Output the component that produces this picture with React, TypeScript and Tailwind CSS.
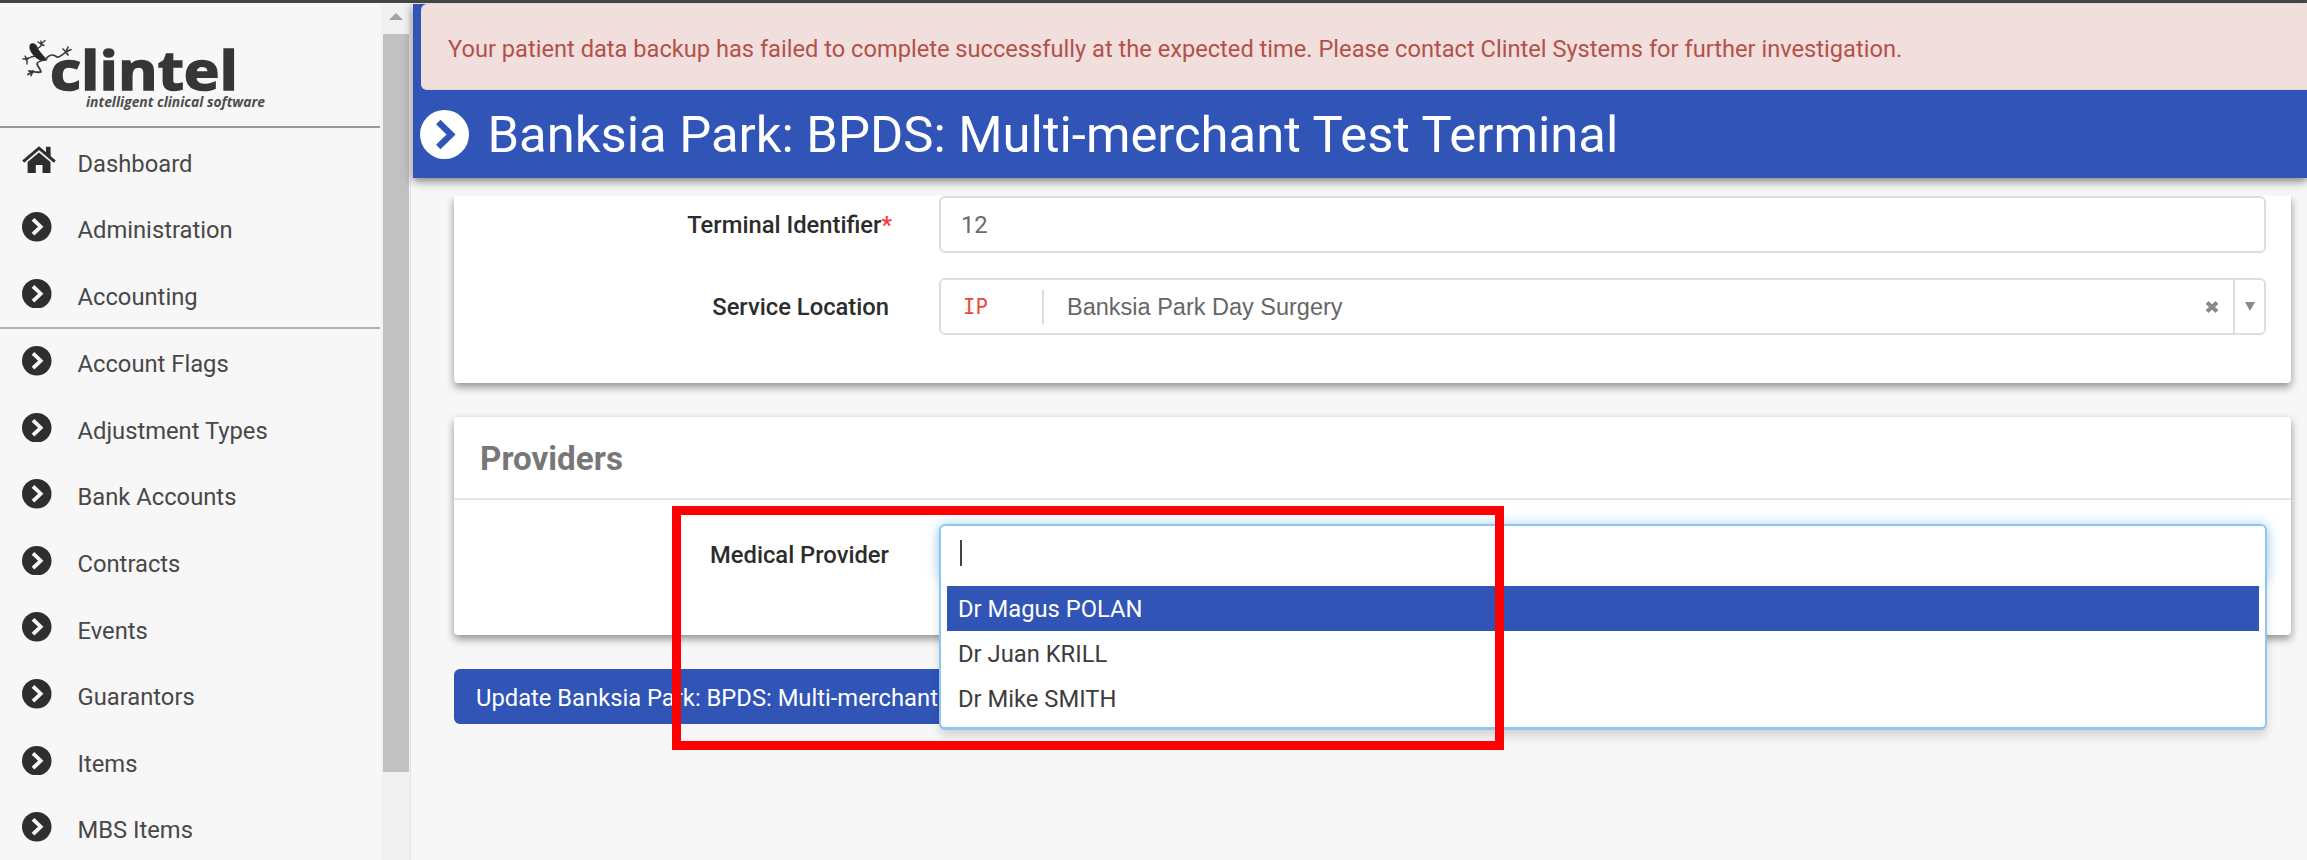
import React, { useState } from 'react';
import clsx from 'clsx';

const mainLinks = ['Administration', 'Accounting'];

const accountingLinks = [
  'Account Flags',
  'Adjustment Types',
  'Bank Accounts',
  'Contracts',
  'Events',
  'Guarantors',
  'Items',
  'MBS Items',
];

const providers = ['Dr Magus POLAN', 'Dr Juan KRILL', 'Dr Mike SMITH'];

const ChevronCircle: React.FC<{ className?: string }> = ({ className }) => (
  <svg viewBox="0 0 30 30" className={className}>
    <circle cx="15" cy="15" r="15" fill="currentColor" />
    <path d="M11.2 7.4 L19 15 L11.2 22.6" fill="none" stroke="var(--chevron)" strokeWidth="3.9" />
  </svg>
);

const HomeIcon = () => (
  <svg viewBox="0 0 34 28" className="h-7 w-[34px]" fill="#2e2e2e">
    <path d="M17 6.5 L28.5 16 V27 H20.5 V19 H13.8 V27 H5.6 V16 Z" />
    <path d="M1.2 15.6 L17 2.2 L32.8 15.6" fill="none" stroke="#2e2e2e" strokeWidth="3" />
    <path d="M24 0.8 H28.6 V11 L24 7 Z" />
  </svg>
);

const Logo = () => (
  <svg viewBox="0 0 260 84" className="ml-5 h-[84px] w-[260px] overflow-visible">
    {/* frog */}
    <g transform="translate(-20 -36)" fill="none" stroke="#3a3a3a" strokeLinecap="round" strokeLinejoin="round">
      <path d="M30 44.5 C32 42 36 43 37.5 47 C39 51 42 54 47.5 60 C43 62.5 38 60 35 57 C31 53 28 48 30 44.5 Z" fill="#262626" stroke="none" />
      <path d="M37 49 L41 46 L41 41 M41 44 L38 42 M41 44 L45 40.5 M41 44 L44 45.5" strokeWidth="1.4" />
      <path d="M35 56 L31 57 L26 60 M29 58 L23 59 M27 59.5 L25 56 M27 59.5 L27 64" strokeWidth="1.4" />
      <path d="M46 59 C50 54 53 54 57 57 C60 58 62 54 67 51.5 M66 52 L63 49 M66 52 L68 47 M66 52 L71 49.5 M66 52 L68 55" strokeWidth="1.6" />
      <path d="M44 60 C40 61 37 62 37 64 C38 67 41 70 41 72 C37 73 32 71 29 71 M33 71 L28 74.5 M33 71 L31 75.5" strokeWidth="1.8" />
    </g>
    <text
      x="30"
      y="54"
      fontSize="53"
      fontWeight="700"
      fill="#363636"
      stroke="#363636"
      strokeWidth="1.5"
      textLength="188"
      lengthAdjust="spacingAndGlyphs"
      fontFamily="'Open Sans', sans-serif"
    >
      clintel
    </text>
    <text
      x="66"
      y="71"
      fontSize="14.5"
      fontWeight="700"
      fontStyle="italic"
      fill="#4d4d4d"
      textLength="179"
      lengthAdjust="spacingAndGlyphs"
      fontFamily="'Open Sans', sans-serif"
    >
      intelligent clinical software
    </text>
  </svg>
);

const NavItem: React.FC<{ label: string; home?: boolean }> = ({ label, home }) => (
  <li className="h-[66.6px]">
    <a href="#" className="flex h-full items-center text-[#484848]">
      <span className="mb-[7px] ml-[22px] w-[55.5px] text-[#2e2e2e]">
        {home ? <HomeIcon /> : <ChevronCircle className="h-[29.5px] w-[29.5px] [--chevron:#f7f7f7]" />}
      </span>
      {label}
    </a>
  </li>
);

const Sidebar = () => (
  <aside className="flex h-full w-[413px] shrink-0">
    <nav className="w-[380px]">
      <div className="h-[122px] pt-8">
        <Logo />
      </div>
      <ul className="h-[201px] border-t-2 border-[#999] pt-[2.5px]">
        <NavItem label="Dashboard" home />
        {mainLinks.map((label) => (
          <NavItem key={label} label={label} />
        ))}
      </ul>
      <ul className="border-t-2 border-[#b0b0b0] pt-[2px]">
        {accountingLinks.map((label) => (
          <NavItem key={label} label={label} />
        ))}
      </ul>
    </nav>
    <div className="ml-[1px] w-[30px] border-r border-[#e4e4e4] bg-[#f1f1f1] pl-[2px]">
      <div className="flex h-[30px] w-[26px] items-center justify-center pt-[3px]">
        <span className="-mt-2 h-0 w-0 border-x-[7px] border-b-[7px] border-x-transparent border-b-[#a3a3a3]" />
      </div>
      <div className="h-[738px] w-[26px] bg-[#c1c1c1]" />
    </div>
  </aside>
);

const Label: React.FC<{ children: React.ReactNode; required?: boolean }> = ({ children, required }) => (
  <label className={clsx('w-[485px] shrink-0 text-right font-medium text-[#2c2c2c]', required ? 'pr-[47px]' : 'pr-[50px]')}>
    {children}
    {required && <span className="text-[#f33]">*</span>}
  </label>
);

const App: React.FC = () => {
  const [active, setActive] = useState(0);

  return (
    <div className="relative h-[860px] w-full overflow-hidden border-t-[3px] border-[#454545] bg-[#f7f7f7] font-['Roboto',sans-serif] text-[23.75px] leading-[34px]">
      <div className="flex h-full pt-[1px]">
        <Sidebar />

        <main className="min-w-0 flex-1">
          <header className="relative z-10 h-[174px] bg-[#3055b7] pl-2 text-white shadow-[0_3px_9px_rgba(0,0,0,0.5)]">
            <div className="flex h-[86px] items-center rounded-l-md border-b border-[#f0cfc4] bg-[#f0dfdd] pt-[4px] pl-[27px] text-[23.65px] text-[#b5504a]">
              Your patient data backup has failed to complete successfully at the expected time. Please contact Clintel Systems for further investigation.
            </div>
            <div className="flex h-[88px] items-center">
              <ChevronCircle className="-ml-[1px] h-[49px] w-[49px] [--chevron:#3055b7]" />
              <h1 className="ml-[18.5px] pt-[2px] text-[50.75px] leading-[60px]">Banksia Park: BPDS: Multi-merchant Test Terminal</h1>
            </div>
          </header>

          <div className="pr-4 pl-[41px]">
            <section className="mt-[18px] h-[187px] rounded-b-[4px] bg-white shadow-[0_4px_9px_rgba(0,0,0,0.42)] [clip-path:inset(0_-20px_-20px_-20px)]">
              <div className="flex h-[57px] items-center">
                <Label required>Terminal Identifier</Label>
                <div className="mr-[25px] flex h-[57px] flex-1 items-center rounded-md border-2 border-[#dedede] pl-[20px] text-[#6a6a6a]">12</div>
              </div>
              <div className="mt-[25px] flex h-[57px] items-center">
                <Label>Service Location</Label>
                <div className="mr-[25px] flex h-[57px] flex-1 items-center rounded-md border-2 border-[#dedede] text-[#666]">
                  <code className="ml-[22px] w-[79px] font-['DejaVu_Sans_Mono',monospace] text-[20.6px] text-[#f04a3a]">IP</code>
                  <span className="h-[34px] w-[2px] bg-[#dcdcdc]" />
                  <span className="ml-[23px] flex-1 font-['Liberation_Sans',sans-serif] text-[23.5px]">Banksia Park Day Surgery</span>
                  <svg viewBox="0 0 14 12" className="mr-[14px] h-3 w-[14px]">
                    <path d="M2 1.5 L12 10.5 M12 1.5 L2 10.5" stroke="#8a8a8a" strokeWidth="4" />
                  </svg>
                  <div className="flex h-full w-[31px] items-center justify-center border-l-2 border-[#dedede]">
                    <span className="h-0 w-0 border-x-[5px] border-t-[9px] border-x-transparent border-t-[#8a8a8a]" />
                  </div>
                </div>
              </div>
            </section>

            <section className="relative mt-[34px] h-[218px] rounded-[4px] bg-white shadow-[0_4px_9px_rgba(0,0,0,0.42)]">
              <h2 className="flex h-[83px] items-center border-b-2 border-[#e6e6e6] pt-[2px] pl-[26px] text-[33.2px] font-bold text-[#777]">Providers</h2>
              <div className="flex h-[110px] items-center">
                <Label>Medical Provider</Label>
              </div>
              {/* open provider picker */}
              <div className="absolute top-[107px] right-[24px] left-[485px] z-20 h-[206px] rounded-[6px] border-2 border-b-[3px] border-[#8fc7f2] bg-white shadow-[0_6px_10px_rgba(0,0,0,0.14)]">
                <div className="absolute -top-[2px] -right-[2px] -left-[2px] -z-10 h-[56px] rounded-[6px] shadow-[0_0_13px_rgba(110,190,245,0.6)]" />
                <div className="flex h-[60px] items-start rounded-[5px] bg-white pt-[14px] pl-[19px]">
                  <span className="h-[26px] w-[2px] bg-[#444]" />
                </div>
                <ul className="mx-[6px]">
                  {providers.map((name, i) => (
                    <li
                      key={name}
                      onMouseEnter={() => setActive(i)}
                      className={clsx('flex h-[45.3px] items-center pl-[11px]', active === i ? 'bg-[#3055b7] text-white' : 'text-[#3c3c3c]')}
                    >
                      {name}
                    </li>
                  ))}
                </ul>
              </div>
            </section>

            <button className="mt-[34px] flex h-[55px] w-[560px] items-center rounded-md bg-[#3055b7] pt-[2px] pl-[22px] text-white">
              Update Banksia Park: BPDS: Multi-merchant
            </button>
          </div>
        </main>
      </div>

      {/* callout around the provider picker */}
      <div className="pointer-events-none absolute top-[503px] left-[672px] z-30 h-[244px] w-[832px] border-[9px] border-[#ff0000]" />
    </div>
  );
};

export default App;
